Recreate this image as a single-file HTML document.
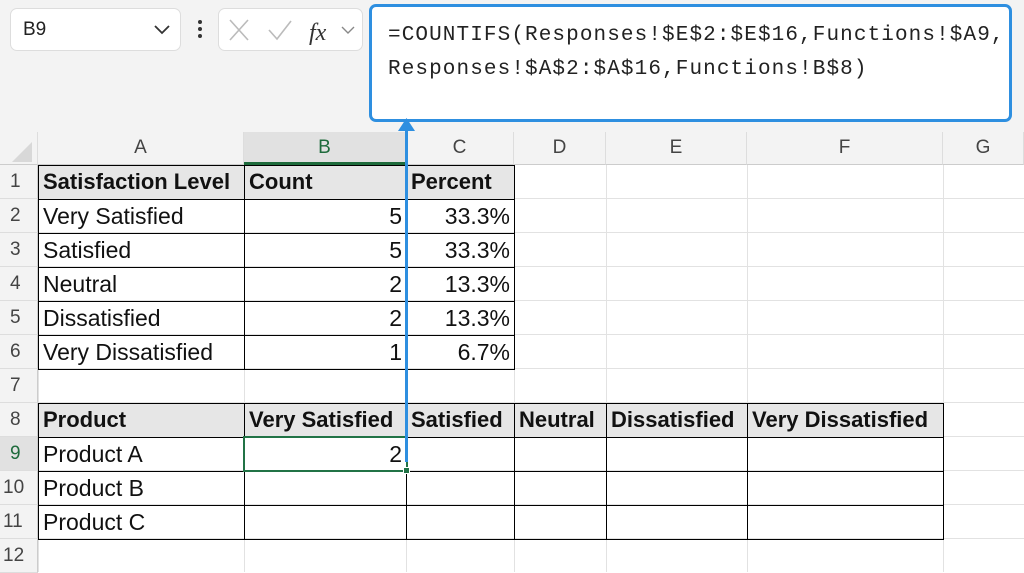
<!DOCTYPE html>
<html><head><meta charset="utf-8"><style>
*{margin:0;padding:0;box-sizing:border-box}
body{width:1024px;height:572px;overflow:hidden;background:#fff;font-family:"Liberation Sans",sans-serif;position:relative}
.top{position:absolute;left:0;top:0;width:1024px;height:132px;background:#f3f3f3}
.a{position:absolute}
.nb{left:10px;top:8px;width:171px;height:43px;background:#fff;border:1px solid #ddd;border-radius:7px;font-size:19px;padding:10px 0 0 12px;color:#222}
.fx{left:218px;top:8px;width:145px;height:43px;background:#fff;border:1px solid #ddd;border-radius:7px}
.fbox{left:369px;top:4px;width:643px;height:118px;background:#fff;border:3px solid #2e8fe0;border-radius:7px;font-family:"Liberation Mono",monospace;font-size:21px;letter-spacing:1.1px;color:#222;padding:12px 0 0 16px;line-height:34px;white-space:nowrap;overflow:hidden}
.ch{top:132px;height:33px;background:#f3f3f3;border-right:1px solid #ddd;border-bottom:1px solid #ccc;text-align:center;font-size:19px;color:#444;padding-top:5px}
.rh{left:0;width:38px;height:34px;background:#f3f3f3;border-bottom:1px solid #ddd;border-right:1px solid #ccc;font-size:19px;color:#444;padding:6px 0 0 10px}
.c{position:absolute;height:35px;border:1px solid #000;font-size:23px;padding:3px 4px 0 4px;color:#111;white-space:nowrap}
.h{background:#e6e6e6;font-weight:bold;font-size:22px}
.r{text-align:right}
.g{position:absolute;background:#e2e2e2}
</style></head><body>
<div class="top"></div>
<div class="a nb">B9<svg class="a" style="left:143px;top:16px" width="16" height="10"><path d="M1 1 L8 8 L15 1" stroke="#333" stroke-width="1.8" fill="none"/></svg></div>
<div class="a" style="left:198px;top:20px;width:4px;height:4px;background:#333;border-radius:2px;box-shadow:0 7px 0 #333,0 14px 0 #333"></div>
<div class="a fx"><svg width="145" height="43"><path d="M11 11 L29 31 M29 11 L11 31" stroke="#bbb" stroke-width="1.6"/><path d="M50 21 L58 30 L72 12" stroke="#bbb" stroke-width="1.6" fill="none"/><text x="90" y="31" font-family="Liberation Serif" font-style="italic" font-size="24" fill="#333">fx</text><path d="M123 18 L129 24 L135 18" stroke="#888" stroke-width="1.4" fill="none"/></svg></div>
<div class="a fbox">=COUNTIFS(Responses!$E$2:$E$16,Functions!$A9,<br>Responses!$A$2:$A$16,Functions!B$8)</div>

<div class="g" style="left:38px;top:165px;width:1px;height:407px"></div>
<div class="g" style="left:244px;top:165px;width:1px;height:407px"></div>
<div class="g" style="left:406px;top:165px;width:1px;height:407px"></div>
<div class="g" style="left:514px;top:165px;width:1px;height:407px"></div>
<div class="g" style="left:606px;top:165px;width:1px;height:407px"></div>
<div class="g" style="left:747px;top:165px;width:1px;height:407px"></div>
<div class="g" style="left:943px;top:165px;width:1px;height:407px"></div>
<div class="g" style="left:38px;top:198px;width:986px;height:1px;box-shadow:0 34px 0 #e2e2e2,0 68px 0 #e2e2e2,0 102px 0 #e2e2e2,0 136px 0 #e2e2e2,0 170px 0 #e2e2e2,0 204px 0 #e2e2e2,0 238px 0 #e2e2e2,0 272px 0 #e2e2e2,0 306px 0 #e2e2e2,0 340px 0 #e2e2e2"></div>

<div class="a ch" style="left:0;width:38px"><svg width="38" height="30" style="position:absolute;left:0;top:0"><path d="M12 30 L32 30 L32 10 Z" fill="#d8d8d8"/></svg></div>
<div class="a ch" style="left:38px;width:206px">A</div>
<div class="a ch" style="left:244px;width:162px;background:#e1e1e1;color:#1e6b3c;border-bottom:3px solid #1e6b3c">B</div>
<div class="a ch" style="left:406px;width:108px">C</div>
<div class="a ch" style="left:514px;width:92px">D</div>
<div class="a ch" style="left:606px;width:141px">E</div>
<div class="a ch" style="left:747px;width:196px">F</div>
<div class="a ch" style="left:943px;width:81px">G</div>

<div class="a rh" style="top:165px">1</div><div class="a rh" style="top:199px">2</div><div class="a rh" style="top:233px">3</div><div class="a rh" style="top:267px">4</div><div class="a rh" style="top:301px">5</div><div class="a rh" style="top:335px">6</div><div class="a rh" style="top:369px">7</div><div class="a rh" style="top:403px">8</div><div class="a rh" style="top:437px;background:#e1e1e1;color:#1e6b3c">9</div><div class="a rh" style="top:471px;padding-left:3px">10</div><div class="a rh" style="top:505px;padding-left:3px">11</div><div class="a rh" style="top:539px;padding-left:3px">12</div>

<div class="c h" style="left:38px;top:165px;width:207px">Satisfaction Level</div>
<div class="c h" style="left:244px;top:165px;width:163px">Count</div>
<div class="c h" style="left:406px;top:165px;width:109px">Percent</div>
<div class="c" style="left:38px;top:199px;width:207px">Very Satisfied</div><div class="c r" style="left:244px;top:199px;width:163px">5</div><div class="c r" style="left:406px;top:199px;width:109px">33.3%</div>
<div class="c" style="left:38px;top:233px;width:207px">Satisfied</div><div class="c r" style="left:244px;top:233px;width:163px">5</div><div class="c r" style="left:406px;top:233px;width:109px">33.3%</div>
<div class="c" style="left:38px;top:267px;width:207px">Neutral</div><div class="c r" style="left:244px;top:267px;width:163px">2</div><div class="c r" style="left:406px;top:267px;width:109px">13.3%</div>
<div class="c" style="left:38px;top:301px;width:207px">Dissatisfied</div><div class="c r" style="left:244px;top:301px;width:163px">2</div><div class="c r" style="left:406px;top:301px;width:109px">13.3%</div>
<div class="c" style="left:38px;top:335px;width:207px">Very Dissatisfied</div><div class="c r" style="left:244px;top:335px;width:163px">1</div><div class="c r" style="left:406px;top:335px;width:109px">6.7%</div>

<div class="c h" style="left:38px;top:403px;width:207px">Product</div>
<div class="c h" style="left:244px;top:403px;width:163px">Very Satisfied</div>
<div class="c h" style="left:406px;top:403px;width:109px">Satisfied</div>
<div class="c h" style="left:514px;top:403px;width:93px">Neutral</div>
<div class="c h" style="left:606px;top:403px;width:142px">Dissatisfied</div>
<div class="c h" style="left:747px;top:403px;width:197px">Very Dissatisfied</div>
<div class="c" style="left:38px;top:437px;width:207px">Product A</div><div class="c r" style="left:244px;top:437px;width:163px">2</div><div class="c" style="left:406px;top:437px;width:109px"></div><div class="c" style="left:514px;top:437px;width:93px"></div><div class="c" style="left:606px;top:437px;width:142px"></div><div class="c" style="left:747px;top:437px;width:197px"></div>
<div class="c" style="left:38px;top:471px;width:207px">Product B</div><div class="c" style="left:244px;top:471px;width:163px"></div><div class="c" style="left:406px;top:471px;width:109px"></div><div class="c" style="left:514px;top:471px;width:93px"></div><div class="c" style="left:606px;top:471px;width:142px"></div><div class="c" style="left:747px;top:471px;width:197px"></div>
<div class="c" style="left:38px;top:505px;width:207px">Product C</div><div class="c" style="left:244px;top:505px;width:163px"></div><div class="c" style="left:406px;top:505px;width:109px"></div><div class="c" style="left:514px;top:505px;width:93px"></div><div class="c" style="left:606px;top:505px;width:142px"></div><div class="c" style="left:747px;top:505px;width:197px"></div>

<div class="a" style="left:243px;top:436px;width:165px;height:36px;border:2px solid #217346"></div>
<div class="a" style="left:403px;top:467px;width:7px;height:7px;background:#217346;border:1px solid #fff"></div>

<div class="a" style="left:405px;top:128px;width:3px;height:334px;background:#2e8fe0"></div>
<svg class="a" style="left:398px;top:118px" width="17" height="14"><path d="M8.5 0 L17 13 L0 13 Z" fill="#2e8fe0"/></svg>
</body></html>
